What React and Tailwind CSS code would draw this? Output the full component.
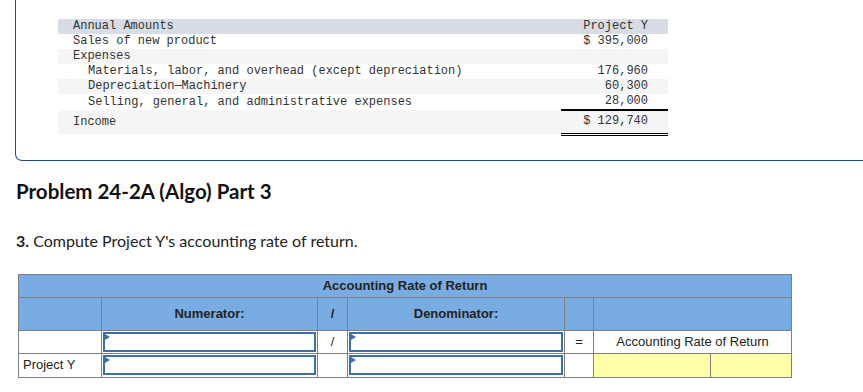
import React from "react";

// Income statement rows shown in the top panel
const rows = [
  { label: "Sales of new product", amount: "$ 395,000", indent: false },
  { label: "Expenses", amount: "", indent: false },
  { label: "Materials, labor, and overhead (except depreciation)", amount: "176,960", indent: true },
  { label: "Depreciation\u2014Machinery", amount: "60,300", indent: true },
  { label: "Selling, general, and administrative expenses", amount: "28,000", indent: true, underline: true },
];

const InputCell = () => (
  <td className="border border-[#808080] p-[1px]">
    <div className="relative h-[20px] border-2 border-[#3d6ea9] bg-white">
      <span className="absolute left-0 top-0 w-0 h-0 border-t-[3px] border-b-[3px] border-l-[5px] border-t-transparent border-b-transparent border-l-[#3d6ea9]" />
    </div>
  </td>
);

export default function App() {
  return (
    <div className="w-[863px] h-[392px] overflow-hidden bg-white">
      {/* data panel, its top and right edges run off the view */}
      <div className="ml-[15px] w-[900px] border-l border-b border-[#1f4e89] rounded-bl-[7px] pl-[42px] pt-[19px] pb-[24px]">
        <table
          className="w-[610px] border-collapse text-[12px] leading-[15px] text-[#333]"
          style={{ fontFamily: '"Liberation Mono", monospace' }}
        >
          <tbody>
            <tr className="bg-[#d8dce5]">
              <td className="pl-[15px] h-[15px]">Annual Amounts</td>
              <td className="w-[107px] pr-[20px] text-right">Project Y</td>
            </tr>
            {rows.map((r, i) => (
              <tr key={i} className={i % 2 === 1 ? "bg-[#f5f5f5]" : "bg-white"}>
                <td className={`h-[15px] ${r.indent ? "pl-[30px]" : "pl-[15px]"}`}>{r.label}</td>
                <td className={`pr-[20px] text-right ${r.underline ? "border-b-2 border-black" : ""}`}>{r.amount}</td>
              </tr>
            ))}
            <tr className="bg-[#f5f5f5]">
              <td className="pl-[15px] h-[24px] align-middle">Income</td>
              <td className="pr-[20px] text-right border-b-[3px] border-double border-black">$ 129,740</td>
            </tr>
          </tbody>
        </table>
      </div>

      <div className="pl-[16px]" style={{ fontFamily: "Lato, sans-serif" }}>
        <h2 className="mt-[18px] text-[20.5px] leading-[24px] font-bold text-[#111]">
          Problem 24-2A (Algo) Part 3
        </h2>
        <p className="mt-[28px] text-[16px] leading-[20px] text-[#222]">
          <span className="font-bold">3.</span> Compute Project Y's accounting rate of return.
        </p>
      </div>

      <table
        className="ml-[18px] mt-[23px] w-[773px] table-fixed border-collapse text-[13px] text-[#222]"
        style={{ fontFamily: '"Liberation Sans", Arial, sans-serif' }}
      >
        <colgroup>
          <col className="w-[83px]" />
          <col className="w-[216px]" />
          <col className="w-[30px]" />
          <col className="w-[217px]" />
          <col className="w-[29px]" />
          <col className="w-[117px]" />
          <col className="w-[81px]" />
        </colgroup>
        <tbody>
          <tr className="bg-[#79ace3] h-[23px]">
            <td colSpan={7} className="border border-[#808080] text-center font-bold">
              Accounting Rate of Return
            </td>
          </tr>
          <tr className="bg-[#79ace3] h-[33px]">
            <td className="border border-[#808080]" />
            <td className="border border-[#808080] text-center font-bold">Numerator:</td>
            <td className="border border-[#808080] text-center font-bold">/</td>
            <td className="border border-[#808080] text-center font-bold">Denominator:</td>
            <td className="border border-[#808080]" />
            <td colSpan={2} className="border border-[#808080]" />
          </tr>
          <tr className="h-[23px]">
            <td className="border border-[#808080]" />
            <InputCell />
            <td className="border border-[#808080] text-center">/</td>
            <InputCell />
            <td className="border border-[#808080] text-center">=</td>
            <td colSpan={2} className="border border-[#808080] text-center">Accounting Rate of Return</td>
          </tr>
          <tr className="h-[24px]">
            <td className="border border-[#808080] pl-[4px]">Project Y</td>
            <InputCell />
            <td className="border border-[#808080]" />
            <InputCell />
            <td className="border border-[#808080]" />
            <td className="border border-[#808080] bg-[#ffffaa]" />
            <td className="border border-[#808080] bg-[#ffffaa]" />
          </tr>
        </tbody>
      </table>
    </div>
  );
}
